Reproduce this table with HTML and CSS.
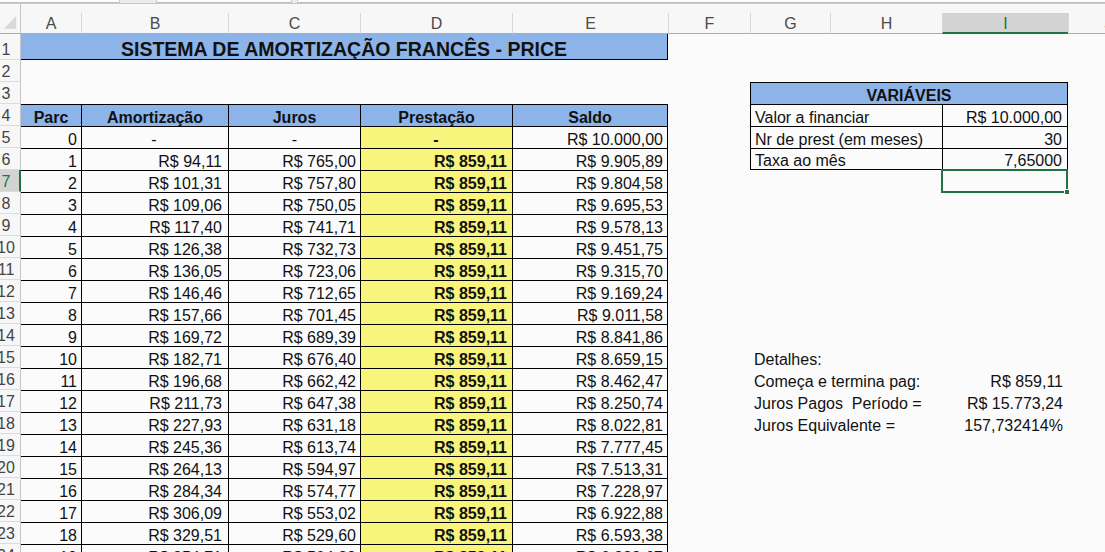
FILE: index.html
```html
<!DOCTYPE html>
<html lang="pt-BR">
<head>
<meta charset="utf-8">
<title>Sistema de Amortização Francês - Price</title>
<link rel="stylesheet" href="styles.css">
</head>
<body>
<div class="topbar"><div class="tab t1"></div><div class="tab t2"></div><div class="tab t3"></div></div>
<div class="sheet">
  <div class="row colhead">
    <div class="corner"><svg width="21" height="21" viewBox="0 0 21 21"><polygon points="17,4 17,17 4,17" fill="#d9d9d9"/></svg></div>
    <div class="ch">A</div><div class="ch">B</div><div class="ch">C</div><div class="ch">D</div><div class="ch">E</div><div class="ch">F</div><div class="ch">G</div><div class="ch">H</div><div class="ch sel">I</div><div class="ch">J</div>
  </div>

  <div class="row r1">
    <div class="rh"><span>1</span></div>
    <div class="c AE title">SISTEMA DE AMORTIZAÇÃO FRANCÊS - PRICE</div>
  </div>
  <div class="row">
    <div class="rh"><span>2</span></div>
  </div>
  <div class="row">
    <div class="rh"><span>3</span></div>
    <div class="c GI vh">VARIÁVEIS</div>
  </div>
  <div class="row">
    <div class="rh"><span>4</span></div>
    <div class="c A t hd">Parc</div><div class="c B t hd">Amortização</div><div class="c C t hd">Juros</div><div class="c D t hd">Prestação</div><div class="c E t hd">Saldo</div>
    <div class="c GH v">Valor a financiar</div><div class="c I v r">R$ 10.000,00</div>
  </div>
  <div class="row">
    <div class="rh"><span>5</span></div>
    <div class="c A t r">0</div><div class="c B t ctr">-</div><div class="c C t ctr">-</div><div class="c D t y ctr">-</div><div class="c E t r">R$ 10.000,00</div>
    <div class="c GH v">Nr de prest (em meses)</div><div class="c I v r">30</div>
  </div>
  <div class="row">
    <div class="rh"><span>6</span></div>
    <div class="c A t r">1</div><div class="c B t r">R$ 94,11</div><div class="c C t r">R$ 765,00</div><div class="c D t y r">R$ 859,11</div><div class="c E t r">R$ 9.905,89</div>
    <div class="c GH v last">Taxa ao mês</div><div class="c I v r last">7,65000</div>
  </div>
  <div class="row">
    <div class="rh sel"><span>7</span></div>
    <div class="c A t r">2</div><div class="c B t r">R$ 101,31</div><div class="c C t r">R$ 757,80</div><div class="c D t y r">R$ 859,11</div><div class="c E t r">R$ 9.804,58</div>
    <div class="c I active"><div class="selbox"><div class="handle"></div></div></div>
  </div>
  <div class="row">
    <div class="rh"><span>8</span></div>
    <div class="c A t r">3</div><div class="c B t r">R$ 109,06</div><div class="c C t r">R$ 750,05</div><div class="c D t y r">R$ 859,11</div><div class="c E t r">R$ 9.695,53</div>
  </div>
  <div class="row">
    <div class="rh"><span>9</span></div>
    <div class="c A t r">4</div><div class="c B t r">R$ 117,40</div><div class="c C t r">R$ 741,71</div><div class="c D t y r">R$ 859,11</div><div class="c E t r">R$ 9.578,13</div>
  </div>
  <div class="row">
    <div class="rh"><span>10</span></div>
    <div class="c A t r">5</div><div class="c B t r">R$ 126,38</div><div class="c C t r">R$ 732,73</div><div class="c D t y r">R$ 859,11</div><div class="c E t r">R$ 9.451,75</div>
  </div>
  <div class="row">
    <div class="rh"><span>11</span></div>
    <div class="c A t r">6</div><div class="c B t r">R$ 136,05</div><div class="c C t r">R$ 723,06</div><div class="c D t y r">R$ 859,11</div><div class="c E t r">R$ 9.315,70</div>
  </div>
  <div class="row">
    <div class="rh"><span>12</span></div>
    <div class="c A t r">7</div><div class="c B t r">R$ 146,46</div><div class="c C t r">R$ 712,65</div><div class="c D t y r">R$ 859,11</div><div class="c E t r">R$ 9.169,24</div>
  </div>
  <div class="row">
    <div class="rh"><span>13</span></div>
    <div class="c A t r">8</div><div class="c B t r">R$ 157,66</div><div class="c C t r">R$ 701,45</div><div class="c D t y r">R$ 859,11</div><div class="c E t r">R$ 9.011,58</div>
  </div>
  <div class="row">
    <div class="rh"><span>14</span></div>
    <div class="c A t r">9</div><div class="c B t r">R$ 169,72</div><div class="c C t r">R$ 689,39</div><div class="c D t y r">R$ 859,11</div><div class="c E t r">R$ 8.841,86</div>
  </div>
  <div class="row">
    <div class="rh"><span>15</span></div>
    <div class="c A t r">10</div><div class="c B t r">R$ 182,71</div><div class="c C t r">R$ 676,40</div><div class="c D t y r">R$ 859,11</div><div class="c E t r">R$ 8.659,15</div>
    <div class="c GH d">Detalhes:</div>
  </div>
  <div class="row">
    <div class="rh"><span>16</span></div>
    <div class="c A t r">11</div><div class="c B t r">R$ 196,68</div><div class="c C t r">R$ 662,42</div><div class="c D t y r">R$ 859,11</div><div class="c E t r">R$ 8.462,47</div>
    <div class="c GH d">Começa e termina pag:</div><div class="c I d r">R$ 859,11</div>
  </div>
  <div class="row">
    <div class="rh"><span>17</span></div>
    <div class="c A t r">12</div><div class="c B t r">R$ 211,73</div><div class="c C t r">R$ 647,38</div><div class="c D t y r">R$ 859,11</div><div class="c E t r">R$ 8.250,74</div>
    <div class="c GH d">Juros Pagos  Período =</div><div class="c I d r">R$ 15.773,24</div>
  </div>
  <div class="row">
    <div class="rh"><span>18</span></div>
    <div class="c A t r">13</div><div class="c B t r">R$ 227,93</div><div class="c C t r">R$ 631,18</div><div class="c D t y r">R$ 859,11</div><div class="c E t r">R$ 8.022,81</div>
    <div class="c GH d">Juros Equivalente =</div><div class="c I d r">157,732414%</div>
  </div>
  <div class="row">
    <div class="rh"><span>19</span></div>
    <div class="c A t r">14</div><div class="c B t r">R$ 245,36</div><div class="c C t r">R$ 613,74</div><div class="c D t y r">R$ 859,11</div><div class="c E t r">R$ 7.777,45</div>
  </div>
  <div class="row">
    <div class="rh"><span>20</span></div>
    <div class="c A t r">15</div><div class="c B t r">R$ 264,13</div><div class="c C t r">R$ 594,97</div><div class="c D t y r">R$ 859,11</div><div class="c E t r">R$ 7.513,31</div>
  </div>
  <div class="row">
    <div class="rh"><span>21</span></div>
    <div class="c A t r">16</div><div class="c B t r">R$ 284,34</div><div class="c C t r">R$ 574,77</div><div class="c D t y r">R$ 859,11</div><div class="c E t r">R$ 7.228,97</div>
  </div>
  <div class="row">
    <div class="rh"><span>22</span></div>
    <div class="c A t r">17</div><div class="c B t r">R$ 306,09</div><div class="c C t r">R$ 553,02</div><div class="c D t y r">R$ 859,11</div><div class="c E t r">R$ 6.922,88</div>
  </div>
  <div class="row">
    <div class="rh"><span>23</span></div>
    <div class="c A t r">18</div><div class="c B t r">R$ 329,51</div><div class="c C t r">R$ 529,60</div><div class="c D t y r">R$ 859,11</div><div class="c E t r">R$ 6.593,38</div>
  </div>
  <div class="row">
    <div class="rh"><span>24</span></div>
    <div class="c A t r">19</div><div class="c B t r">R$ 354,71</div><div class="c C t r">R$ 504,39</div><div class="c D t y r">R$ 859,11</div><div class="c E t r">R$ 6.238,67</div>
  </div>
</div>
</body>
</html>
```

FILE: styles.css
```css
* { box-sizing: border-box; }

html, body {
  margin: 0;
  padding: 0;
  background: #fbfbfb;
  overflow: hidden;
}

body {
  width: 1105px;
  height: 552px;
  font-family: "Liberation Sans", Arial, sans-serif;
  font-size: 16px;
  color: #111;
}

/* thin strip of the formula bar above the sheet */
.topbar {
  height: 4px;
  display: flex;
  background: #ececec;
  border-bottom: 1px solid #c9c9c9;
}
.tab {
  height: 3px;
  background: #fdfdfd;
  border-left: 1px solid #cfcfcf;
  border-right: 1px solid #cfcfcf;
  border-bottom: 1px solid #bdbdbd;
}
.t1 { width: 120px; border-left: none; }
.t2 { width: 136px; margin-left: 36px; }
.t3 { flex: 1; margin-left: 5px; border-right: none; }

.sheet {
  position: relative;
}

.row {
  display: grid;
  grid-template-columns: 21px 60px 147px 132px 152px 156px 82px 80px 112px 126px 80px;
  height: 22px;
}
.row.r1 { height: 26px; }

/* column headers */
.colhead {
  height: 30px;
  padding-top: 9px;
  background: #f7f7f7;
}
.corner {
  margin-top: -9px;
  height: 30px;
  display: flex;
  align-items: flex-end;
  border-right: 1px solid #c6c6c6;
  border-bottom: 1px solid #ababab;
}
.corner svg { display: block; }
.ch {
  height: 21px;
  border-left: 1px solid #d8d8d8;
  border-bottom: 1px solid #ababab;
  display: flex;
  justify-content: center;
  align-items: center;
  padding-top: 2px;
  font-size: 16px;
  color: #4a4a4a;
  line-height: 20px;
}
.ch:nth-child(2) { border-left: none; }
.ch.sel {
  background: #d3d3d3;
  color: #217346;
  border-bottom: 2px solid #217346;
  padding-top: 3px;
}

/* row headers */
.rh {
  grid-column: 1;
  overflow: hidden;
  background: #f7f7f7;
  border-right: 1px solid #c6c6c6;
  border-bottom: 1px solid #dcdcdc;
  display: flex;
  align-items: flex-end;
  color: #444;
  line-height: 18px;
}
.rh span {
  flex: none;
  width: 30px;
  margin-left: -9px;
  text-align: center;
}
.rh.sel {
  background: #d3d3d3;
  color: #217346;
  border-right: 2px solid #217346;
}

/* cells */
.c {
  display: flex;
  align-items: flex-end;
  line-height: 17px;
  padding: 0 4px;
  white-space: pre;
}
.A { grid-column: 2; }
.B { grid-column: 3; padding-right: 6px; }
.C { grid-column: 4; }
.D { grid-column: 5; padding-right: 5px; }
.E { grid-column: 6; }
.I { grid-column: 10; padding-right: 5px; }
.AE { grid-column: 2 / 7; }
.GH { grid-column: 8 / 10; }
.GI { grid-column: 8 / 11; }

.r { justify-content: flex-end; }
.ctr { justify-content: center; }

.title {
  background: #8db4e8;
  border-right: 1px solid #000;
  border-bottom: 1px solid #000;
  justify-content: center;
  font-weight: bold;
  font-size: 19.5px;
  line-height: 20px;
}

.t {
  border-top: 1px solid #000;
  border-left: 1px solid #000;
}
.A.t { border-left: none; }
.E.t { border-right: 1px solid #000; }
.hd {
  background: #8db4e8;
  font-weight: bold;
  justify-content: center;
  padding-right: 4px;
}
.y {
  background: #f8f47c;
  font-weight: bold;
}

.vh {
  background: #8db4e8;
  border: 1px solid #000;
  border-bottom: none;
  justify-content: center;
  font-weight: bold;
}
.v {
  border-top: 1px solid #000;
  border-left: 1px solid #000;
}
.I.v { border-right: 1px solid #000; }
.v.last { border-bottom: 1px solid #000; }

.active { position: relative; }
.selbox {
  position: absolute;
  left: -1px;
  top: -1px;
  width: 127px;
  height: 24px;
  border: 2px solid #217346;
}
.handle {
  position: absolute;
  right: -4px;
  bottom: -4px;
  width: 6px;
  height: 6px;
  background: #217346;
  border: 1px solid #fff;
}
```
